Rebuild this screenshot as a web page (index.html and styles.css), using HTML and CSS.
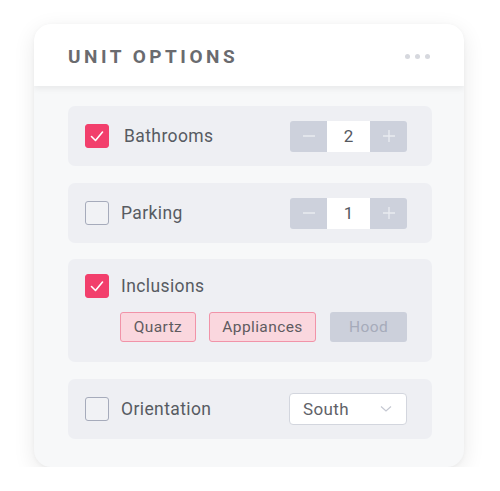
FILE: index.html
```html
<!DOCTYPE html>
<html>
<head>
<meta charset="utf-8">
<link rel="stylesheet" href="styles.css">
</head>
<body>
<div class="page">
  <div class="card">
    <div class="card-header">
      <h1 class="title">UNIT OPTIONS</h1>
      <div class="dots"><span></span><span></span><span></span></div>
    </div>
    <div class="card-body">
      <div class="row">
        <div class="opt">
          <span class="check checked"><svg viewBox="0 0 24 24" width="24" height="24"><path d="M6.5 12.5 L10.5 16.5 L17.5 8" fill="none" stroke="#fff" stroke-width="1.6" stroke-linecap="round" stroke-linejoin="round"/></svg></span>
          <span class="label label-wide">Bathrooms</span>
        </div>
        <div class="stepper">
          <span class="step-btn"><svg viewBox="0 0 16 16" width="16" height="16"><path d="M2 8 H14" stroke="#e9ebf0" stroke-width="1.4"/></svg></span>
          <span class="step-val">2</span>
          <span class="step-btn"><svg viewBox="0 0 16 16" width="16" height="16"><path d="M2 8 H14 M8 2 V14" stroke="#e9ebf0" stroke-width="1.4"/></svg></span>
        </div>
      </div>
      <div class="row">
        <div class="opt">
          <span class="check"></span>
          <span class="label">Parking</span>
        </div>
        <div class="stepper">
          <span class="step-btn"><svg viewBox="0 0 16 16" width="16" height="16"><path d="M2 8 H14" stroke="#e9ebf0" stroke-width="1.4"/></svg></span>
          <span class="step-val">1</span>
          <span class="step-btn"><svg viewBox="0 0 16 16" width="16" height="16"><path d="M2 8 H14 M8 2 V14" stroke="#e9ebf0" stroke-width="1.4"/></svg></span>
        </div>
      </div>
      <div class="row row-tall">
        <div class="opt">
          <span class="check checked"><svg viewBox="0 0 24 24" width="24" height="24"><path d="M6.5 12.5 L10.5 16.5 L17.5 8" fill="none" stroke="#fff" stroke-width="1.6" stroke-linecap="round" stroke-linejoin="round"/></svg></span>
          <span class="label">Inclusions</span>
        </div>
        <div class="chips">
          <span class="chip chip-on chip-quartz">Quartz</span>
          <span class="chip chip-on chip-appl">Appliances</span>
          <span class="chip chip-off">Hood</span>
        </div>
      </div>
      <div class="row">
        <div class="opt">
          <span class="check"></span>
          <span class="label">Orientation</span>
        </div>
        <div class="select">
          <span class="select-val">South</span>
          <svg viewBox="0 0 12 8" width="12" height="8"><path d="M1 1.5 L6 6 L11 1.5" fill="none" stroke="#c5c8d2" stroke-width="1.2"/></svg>
        </div>
      </div>
    </div>
  </div>
</div>
</body>
</html>
```
FILE: styles.css
```css
* { box-sizing: border-box; }
html, body { margin: 0; padding: 0; background: #ffffff; }
body { font-family: Roboto, "Liberation Sans", sans-serif; }
.page { padding: 24px 0 0 34px; }
.card {
  width: 430px;
  height: 443px;
  border-radius: 17px;
  background: #f7f8f9;
  box-shadow: 0 6px 22px rgba(0, 0, 0, 0.09), 0 1px 4px rgba(0, 0, 0, 0.04);
  overflow: hidden;
  display: flex;
  flex-direction: column;
}
.card-header {
  height: 62px;
  background: #ffffff;
  display: flex;
  align-items: center;
  justify-content: space-between;
  padding: 2px 34px 0 34px;
  box-shadow: 0 3px 6px rgba(0, 0, 0, 0.06);
  position: relative;
  z-index: 1;
}
.title {
  margin: 0;
  font-size: 19px;
  font-weight: 700;
  letter-spacing: 3.5px;
  color: #6a6b6f;
}
.dots { display: flex; gap: 5px; }
.dots span {
  width: 5px; height: 5px; border-radius: 50%;
  background: #d6d8de;
}
.card-body {
  padding: 20px 32px 28px 34px;
  display: flex;
  flex-direction: column;
  gap: 17px;
}
.row {
  height: 60px;
  background: #eeeff3;
  border-radius: 7px;
  padding: 0 25px 0 17px;
  display: flex;
  align-items: center;
  justify-content: space-between;
}
.row-tall {
  height: 103px;
  flex-direction: column;
  align-items: stretch;
  justify-content: flex-start;
  padding-top: 15px;
  margin-top: -1px;
}
.opt { display: flex; align-items: center; }
.check {
  width: 24px; height: 24px;
  border-radius: 3px;
  border: 1px solid #a6abbb;
  background: #f1f2f5;
  display: block;
}
.check svg { display: block; margin: -1px; }
.check.checked { background: #f23f6c; border-color: #f23f6c; }
.label {
  margin-left: 12px;
  font-size: 17.5px;
  letter-spacing: 0.4px;
  color: #575b62;
}
.label-wide { margin-left: 15px; }
.stepper {
  display: flex;
  height: 31px;
  border-radius: 3px;
  overflow: hidden;
}
.step-btn {
  width: 37px;
  background: #cdd1dc;
  display: flex; align-items: center; justify-content: center;
}
.step-val {
  width: 43px;
  background: #ffffff;
  display: flex; align-items: center; justify-content: center;
  font-size: 17px;
  color: #55585f;
}
.chips {
  display: flex;
  margin-top: 14px;
  margin-left: 35px;
}
.chip {
  height: 30px;
  border-radius: 3px;
  display: flex; align-items: center; justify-content: center;
  font-size: 15.5px;
  letter-spacing: 0.4px;
}
.chip-on {
  background: #fad7de;
  border: 1px solid #f193a8;
  color: #5e5b60;
}
.chip-quartz { width: 76px; }
.chip-appl { width: 107px; margin-left: 13px; }
.chip-off {
  width: 77px;
  margin-left: 14px;
  background: #ccd0db;
  color: #a6abba;
}
.select {
  width: 118px;
  height: 32px;
  background: #ffffff;
  border: 1px solid #d3d6de;
  border-radius: 4px;
  display: flex; align-items: center; justify-content: space-between;
  padding: 0 14px 0 13px;
}
.select-val { font-size: 17px; letter-spacing: 0.4px; color: #5f6268; }
```
